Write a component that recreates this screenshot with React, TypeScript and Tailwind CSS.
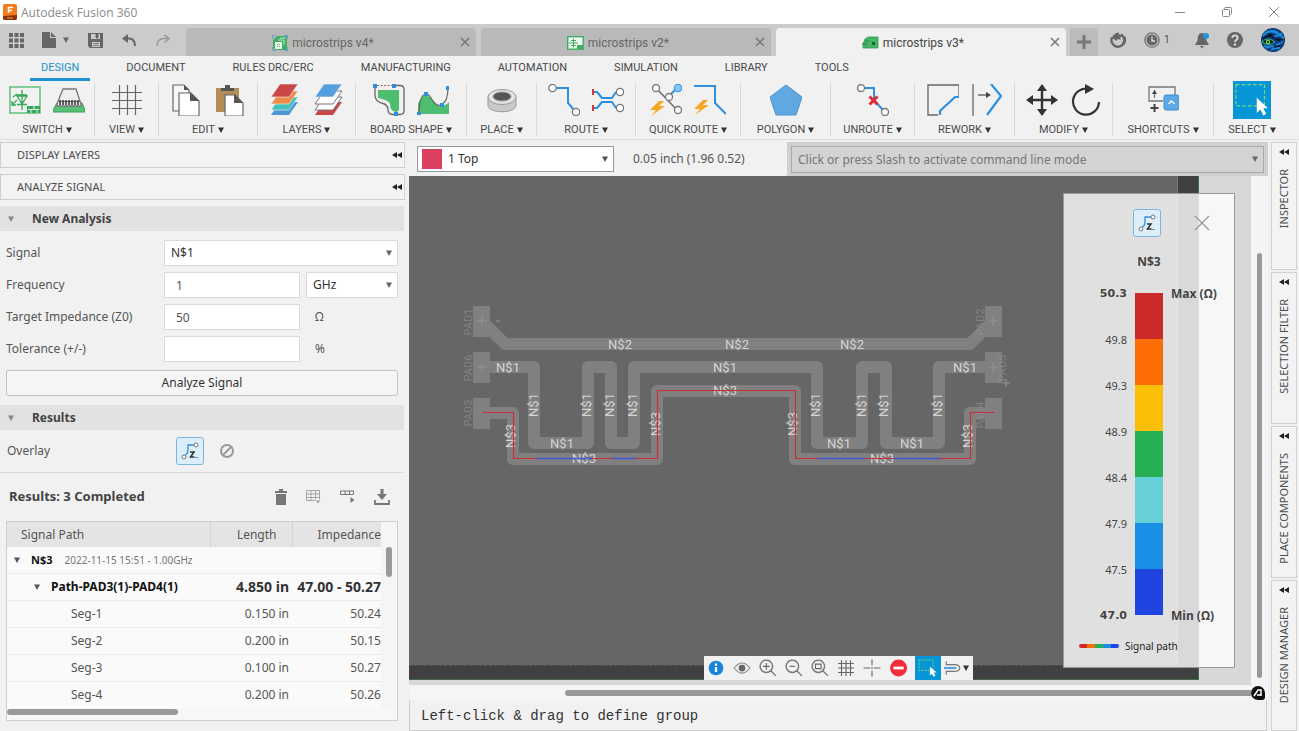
import { useState, type ReactNode } from "react"
import clsx from "clsx"

const ui = "font-['Noto_Sans',sans-serif]"

function Caret({ className = "" }: { className?: string }) {
    return (
        <svg viewBox="0 0 6 6" className={clsx("h-[6px] w-[6px] shrink-0", className)} aria-hidden="true">
            <path d="M0 .5h6L3 6z" fill="currentColor" />
        </svg>
    )
}

function Rewind() {
    return (
        <svg viewBox="0 0 10 6" className="h-[6px] w-[10px] shrink-0 text-[#222]" aria-hidden="true">
            <path d="M5 0v6L0 3zM10 0v6L5 3z" fill="currentColor" />
        </svg>
    )
}

function Icon({ children, className = "h-8 w-8" }: { children: ReactNode; className?: string }) {
    return (
        <svg viewBox="0 0 32 32" fill="none" className={clsx("shrink-0", className)} aria-hidden="true">
            {children}
        </svg>
    )
}

/* ---------- title bar ---------- */

function TitleBar() {
    return (
        <header className="flex h-6 shrink-0 items-center bg-white pl-[3px] font-['Open_Sans',sans-serif]">
            <svg viewBox="0 0 14 16" className="h-4 w-[14px]" aria-hidden="true">
                <rect width="14" height="16" rx="2" fill="#f47a1f" />
                <path d="M0 12l14-1v3a2 2 0 0 1-2 2H2a2 2 0 0 1-2-2z" fill="#8a3208" />
                <path d="M5.5 9V3.5H10M5.5 6.5H9" stroke="#fff" strokeWidth="1.5" fill="none" />
                <path d="M4 14h6" stroke="#e8a070" />
            </svg>
            <h1 className="ml-1 pt-px text-[12px] text-[#8a8a8a]">Autodesk Fusion 360</h1>
            <div className="ml-auto flex items-center gap-[35px] pr-[19px] text-[#888]">
                <button aria-label="Minimize">
                    <svg viewBox="0 0 12 12" className="h-3 w-3"><path d="M1 6.5h10" stroke="currentColor" /></svg>
                </button>
                <button aria-label="Restore">
                    <svg viewBox="0 0 12 12" className="h-3 w-3" fill="none" stroke="currentColor">
                        <rect x="1.5" y="3.5" width="7" height="7" rx="1" />
                        <path d="M3.5 3.5v-1a1 1 0 0 1 1-1h5a1 1 0 0 1 1 1v5a1 1 0 0 1-1 1h-1" />
                    </svg>
                </button>
                <button aria-label="Close">
                    <svg viewBox="0 0 12 12" className="h-3 w-3"><path d="M1 1l10 10M11 1L1 11" stroke="currentColor" /></svg>
                </button>
            </div>
        </header>
    )
}

/* ---------- document tabs ---------- */

const docIcons = {
    board3d: (
        <svg viewBox="0 0 16 16" className="h-4 w-4" aria-hidden="true">
            <path d="M1 5l4-4h10v14H3l-2-2z" fill="#3fae63" />
            <path d="M3 7h7v7H3z" fill="#e9f7ee" />
            <path d="M5 9h1v1H5zM7 9h1v1H7zM5 11h1v1H5zM7 11h1v1H7z" fill="#3fae63" />
            <path d="M6 5h6v5M8 3h6" stroke="#bfe8cc" fill="none" />
            <path d="M0 4V0h4M12 0h4v4M16 12v4h-4M4 16H0v-4" stroke="#3b8de0" fill="none" />
        </svg>
    ),
    schematic: (
        <svg viewBox="0 0 17 14" className="h-[14px] w-[17px]" fill="none" stroke="#3fae63" aria-hidden="true">
            <rect x=".7" y=".7" width="15.5" height="12.5" fill="#eef8f1" strokeWidth="1.4" />
            <path d="M2 7h9M6.5 2.5v9M4 4.5h5M4 9.5h5" />
            <rect x="10.5" y="9.5" width="5" height="3" fill="#3fae63" />
        </svg>
    ),
    board: (
        <svg viewBox="0 0 17 13" className="h-[13px] w-[17px]" aria-hidden="true">
            <path d="M6 1h10v11H1V8l2-5z" fill="#45b368" stroke="#2f9e54" strokeWidth=".8" />
            <path d="M0 8h5M3 5h4" stroke="#2f7e48" fill="none" />
            <rect x="10" y="6" width="3" height="3" fill="#1f5f36" />
        </svg>
    ),
}

const documents = [
    { name: "microstrips v4*", icon: docIcons.board3d },
    { name: "microstrips v2*", icon: docIcons.schematic },
    { name: "microstrips v3*", icon: docIcons.board },
]

function DocumentBar() {
    const [active, setActive] = useState(2)
    return (
        <div className="flex h-8 shrink-0 items-end bg-[#cbcbcb] pr-[14px] font-['Roboto',sans-serif] text-[#666]">
            <div className="flex h-full w-[186px] shrink-0 items-center pl-[9px]">
                <button aria-label="Data panel">
                    <svg viewBox="0 0 15 15" className="h-[15px] w-[15px]" fill="#666">
                        <path d="M0 0h4v4H0zM5.5 0h4v4h-4zM11 0h4v4h-4zM0 5.5h4v4H0zM5.5 5.5h4v4h-4zM11 5.5h4v4h-4zM0 11h4v4H0zM5.5 11h4v4h-4zM11 11h4v4h-4z" />
                    </svg>
                </button>
                <button aria-label="New file" className="ml-[18px] flex items-center gap-[7px]">
                    <svg viewBox="0 0 14 16" className="h-4 w-[14px]" fill="#666">
                        <path d="M0 0h8v6h6v10H0z" /><path d="M9 0l5 5H9z" />
                    </svg>
                    <Caret />
                </button>
                <button aria-label="Save" className="ml-[19px]">
                    <svg viewBox="0 0 15 15" className="h-[15px] w-[15px]">
                        <path d="M0 0h15v15H2l-2-2z" fill="#666" />
                        <path d="M3 1h9v5H3zM4 9h8v5H4z" fill="#cbcbcb" />
                        <path d="M8 1h2v4H8zM5 10.5h6M5 12.5h6" fill="#666" stroke="#666" strokeWidth=".8" />
                    </svg>
                </button>
                <button aria-label="Undo" className="ml-[19px]">
                    <svg viewBox="0 0 14 13" className="h-[13px] w-[14px]" fill="none" stroke="#666">
                        <path d="M3 4.5h4c4 0 6 3 6 7.5" strokeWidth="2" /><path d="M6 0v9L0 4.5z" fill="#666" stroke="none" />
                    </svg>
                </button>
                <button aria-label="Redo" className="ml-[20px]">
                    <svg viewBox="0 0 14 13" className="h-[13px] w-[14px]" fill="none" stroke="#999">
                        <path d="M12 4.5H8c-4.5 0-7 3-7 7.5M8.5.8L13 4.5l-4.5 4" strokeWidth="1.5" />
                    </svg>
                </button>
            </div>
            <div className="flex min-w-0 flex-1 gap-[5px]">
                {documents.map((doc, i) => (
                    <div
                        key={doc.name}
                        className={clsx(
                            "flex h-7 flex-1 items-center rounded-t-[4px] pr-[6px]",
                            i === active ? "bg-[#f1f1f1] text-[#444]" : "bg-[#b9b9b9]",
                        )}
                    >
                        <button onClick={() => setActive(i)} className="flex flex-1 items-center justify-center gap-1 pt-px text-[12px]">
                            {doc.icon}
                            {doc.name}
                        </button>
                        <button aria-label={"Close " + doc.name}>
                            <svg viewBox="0 0 10 10" className="h-[10px] w-[10px]">
                                <path d="M1 1l8 8M9 1L1 9" stroke="#777" strokeWidth="1.5" />
                            </svg>
                        </button>
                    </div>
                ))}
            </div>
            <button aria-label="New tab" className="ml-1 grid h-7 w-7 shrink-0 place-items-center rounded-t-[3px] bg-[#bbb]">
                <svg viewBox="0 0 14 14" className="h-[14px] w-[14px]"><path d="M7 0v14M0 7h14" stroke="#777" strokeWidth="3" /></svg>
            </button>
            <div className="flex h-full shrink-0 items-center pl-3">
                <button aria-label="Extensions">
                    <svg viewBox="0 0 16 16" className="h-4 w-4" fill="none">
                        <path d="M11 2.5A6.5 6.5 0 1 1 2 5.5" stroke="#666" strokeWidth="2.4" />
                        <path d="M14 5A6.5 6.5 0 0 1 13 12" stroke="#666" strokeWidth="3" />
                        <path d="M2 6q1-5 7-5.5v2l4 .5-3 3 1 2-3-1-2 2-2-2z" fill="#666" />
                    </svg>
                </button>
                <button aria-label="Job status" className="ml-[18px] flex items-center gap-1 text-[11px] text-[#555]">
                    <svg viewBox="0 0 16 16" className="h-4 w-4" fill="none">
                        <circle cx="8" cy="8" r="7.2" stroke="#777" strokeWidth="1.3" />
                        <circle cx="8" cy="8" r="5.6" fill="#666" />
                        <path d="M8 4.5V9h3" stroke="#ddd" strokeWidth="1.3" />
                    </svg>
                    1
                </button>
                <button aria-label="Notifications" className="ml-6">
                    <svg viewBox="0 0 16 17" className="h-[17px] w-4">
                        <path d="M8 1c4 0 4 4 4.5 7.5L15 13H1l2.500-4.500C4 5 4 1 8 1zM6 14h4l-2 2.500z" fill="#666" />
                        <circle cx="12" cy="4" r="3" fill="#1b98e0" />
                    </svg>
                </button>
                <button aria-label="Help" className="ml-[17px]">
                    <svg viewBox="0 0 16 16" className="h-4 w-4" fill="none">
                        <circle cx="8" cy="8" r="8" fill="#666" />
                        <path d="M5.3 6c0-3.500 5.400-3.300 5.400 0C10.700 7.800 8 7.800 8 10" stroke="#ddd" strokeWidth="1.8" />
                        <circle cx="8" cy="12.5" r="1.2" fill="#ddd" />
                    </svg>
                </button>
                <button aria-label="Account" className="ml-[18px]">
                    <svg viewBox="0 0 24 24" className="h-6 w-6" fill="none">
                        <circle cx="12" cy="12" r="12" fill="#0c3d78" />
                        <path d="M2 8q5-6 10-4t9 2M4 5q8-4 13 0M13 9q5-4 10 1M15 17q4-1 7-4M5 20q7-4 13 1M10 22q5-3 9-2M17 13l5-2M3 18l4 1" stroke="#1d8ce0" strokeWidth="1.8" />
                        <path d="M2 11q6-5 10-2t8 5M16 11l6 1M7 6l4 1M13 19l6-1" stroke="#0a1526" strokeWidth="1.5" />
                        <path d="M1 14q5-6 13 0-7 5-13 0z" fill="#10231d" stroke="#39b48c" />
                        <circle cx="7" cy="14" r="2.2" fill="#6ee04f" /><circle cx="7" cy="14" r="1" fill="#061018" />
                    </svg>
                </button>
            </div>
        </div>
    )
}

/* ---------- ribbon ---------- */

const menus = ["DESIGN", "DOCUMENT", "RULES DRC/ERC", "MANUFACTURING", "AUTOMATION", "SIMULATION", "LIBRARY", "TOOLS"]

const blue = "#2f8fdf"
const bolt = "M9 0L0 9h6L1 15l14-10H9L14 0z"

const groups = [
    {
        label: "SWITCH",
        width: "w-[95px]",
        icons: [
            <Icon key="a">
                <rect x="1" y="3" width="30" height="26" stroke="#4fb56f" strokeWidth="1.3" />
                <path d="M13 6v20M8 11h10M8 12h10l-5 8zM8 20.5h10M3 21l5-5M3 17v4h4M4 13l4-3" stroke="#35a85a" strokeWidth="1.3" />
                <path d="M18 22h13v7H18z" fill="#35a85a" /><path d="M19 25.5h11M25 22v3M22 26v3M28 26v3" stroke="#d6f2de" />
            </Icon>,
            <Icon key="b">
                <path d="M4 19h25l3 7v2H0v-2z" fill="#57c274" stroke="#3b9c57" />
                <path d="M10 5h13l5 15v2H4v-2z" fill="#eee" stroke="#777" strokeWidth="1.3" />
                <path d="M6 17.5h21" stroke="#777" />
                <path d="M7 16v5M10 16v5M13 16v5M16 16v5M19 16v5M22 16v5M25 16v5" stroke="#333" strokeWidth="1.5" />
            </Icon>,
        ],
    },
    {
        label: "VIEW",
        width: "w-[64px]",
        icons: [<Icon key="a"><path d="M8.5 1v30M16.5 1v30M24.5 1v30M1 8.5h30M1 16.5h30M1 24.5h30" stroke="#666" strokeWidth="1.2" /></Icon>],
    },
    {
        label: "EDIT",
        width: "w-[99px]",
        icons: [
            <Icon key="a">
                <path d="M3 1h11l5 5v21H3z" fill="#f6f6f6" stroke="#666" strokeWidth="1.2" />
                <path d="M9 9h12l8 8v15H9z" fill="#fff" stroke="#666" strokeWidth="1.2" /><path d="M20 8l9 9h-9zM14 1l5 5h-5z" fill="#555" />
            </Icon>,
            <Icon key="b">
                <path d="M2 4h23v24H2z" fill="#b48c58" /><path d="M7 4h13v3H7zM11 1h5v3h-5z" fill="#555" />
                <path d="M11 11h10l8 8v13H11z" fill="#fff" stroke="#666" strokeWidth="1.2" /><path d="M20 10l9 9h-9z" fill="#555" />
            </Icon>,
        ],
    },
    {
        label: "LAYERS",
        width: "w-[98px]",
        icons: [
            <Icon key="a">
                <path d="M11 18h18L20 31H2z" fill="#4c97d8" /><path d="M11 13h18L20 26H2z" fill="#45c0bd" stroke="#f1f1f1" strokeWidth=".6" />
                <path d="M11 7h18L20 20H2z" fill="#f08a48" stroke="#f1f1f1" strokeWidth=".6" /><path d="M11 0h18L20 13H2z" fill="#cb4747" stroke="#f1f1f1" strokeWidth=".6" />
            </Icon>,
            <Icon key="b">
                <path d="M11 18h18L20 31H2z" fill="#cb4747" /><path d="M11 13h18L20 26H2z" fill="#fff" stroke="#777" />
                <path d="M11 7h18L20 20H2z" fill="#fff" stroke="#777" /><path d="M11 0h18L20 13H2z" fill="#559fe0" stroke="#f1f1f1" strokeWidth=".6" />
            </Icon>,
        ],
    },
    {
        label: "BOARD SHAPE",
        width: "w-[111px]",
        icons: [
            <Icon key="a">
                <path d="M5 6h21v20l-2 2q-7 0-7-8-1-4-12-6z" fill="#4fbd70" />
                <path d="M21 1.5h6q4 0 4 4v21q0 4-4 4h-7q-5 0-5-5-.5-5-5-6-8-2-8-8V2" stroke="#666" strokeWidth="1.3" />
                <path d="M4 1.5h16" stroke="#b35a5a" strokeDasharray="2 1.5" />
                <path d="M0 0h4v4H0zM19 0h4v4h-4zM21 28h4v4h-4z" fill={blue} />
            </Icon>,
            <Icon key="b">
                <path d="M1 30V20q5-13 12-7l8 9q7 1 11-4v12z" fill="#4fbd70" />
                <path d="M2 28Q3 10 9 10q3 0 5 4 5 9 10 7 7-3 7-17" stroke="#666" strokeWidth="1.2" />
                <path d="M0 28h4v3H0zM7 8h4v4H7zM23 19h4v4h-4zM29 2h3v4h-3z" fill={blue} />
            </Icon>,
        ],
    },
    {
        label: "PLACE",
        width: "w-[70px]",
        icons: [
            <Icon key="a">
                <path d="M2 13v8c0 9 28 9 28 0v-8z" fill="#c9c9c9" stroke="#999" />
                <ellipse cx="16" cy="13" rx="14" ry="7.5" fill="#e3e3e3" stroke="#999" /><ellipse cx="16" cy="12.5" rx="9" ry="4.5" fill="#555" stroke="#999" />
            </Icon>,
        ],
    },
    {
        label: "ROUTE",
        width: "w-[99px]",
        icons: [
            <Icon key="a">
                <path d="M8 4h12v15l6 7" stroke={blue} strokeWidth="2" />
                <circle cx="4.5" cy="4" r="3.7" fill="#fff" stroke="#777" strokeWidth="1.3" /><circle cx="28" cy="28" r="3.7" fill="#fff" stroke="#777" strokeWidth="1.3" />
            </Icon>,
            <Icon key="b">
                <path d="M1 8h4l5 6h10l4-6M1 24h4l5-6h10l4 6" stroke={blue} strokeWidth="2" strokeLinejoin="round" />
                <path d="M1 5v6M1 21v6" stroke="#d33" strokeWidth="2" />
                <circle cx="28" cy="8" r="3.7" fill="#fff" stroke="#777" strokeWidth="1.3" /><circle cx="28" cy="24" r="3.7" fill="#fff" stroke="#777" strokeWidth="1.3" />
            </Icon>,
        ],
    },
    {
        label: "QUICK ROUTE",
        width: "w-[105px]",
        icons: [
            <Icon key="a">
                <path d="M7 5l20 21" stroke="#666" strokeWidth="1.4" /><path d="M18 13l8-8" stroke={blue} strokeWidth="2" />
                <g fill="#fff" stroke="#777" strokeWidth="1.3"><circle cx="6" cy="4" r="3.5" /><circle cx="19" cy="13" r="3.5" /><circle cx="28" cy="26" r="3.5" /></g>
                <circle cx="28" cy="4" r="3.8" fill="#8cc4f4" stroke={blue} />
                <path d={bolt} fill="#f5a623" transform="translate(0 17)" />
            </Icon>,
            <Icon key="b">
                <path d="M0 2h21v17l11 11" stroke={blue} strokeWidth="2" />
                <path d={bolt} fill="#f5a623" transform="translate(0 16)" />
            </Icon>,
        ],
    },
    {
        label: "POLYGON",
        width: "w-[90px]",
        icons: [<Icon key="a"><path d="M16 1l16 12-6 18H6L0 13z" fill="#5fa8e2" stroke="#4a92cc" /></Icon>],
    },
    {
        label: "UNROUTE",
        width: "w-[84px]",
        icons: [
            <Icon key="a">
                <path d="M7 4h10v12l9 10" stroke={blue} strokeWidth="2" />
                <circle cx="4" cy="4" r="3.5" fill="#fff" stroke="#777" strokeWidth="1.3" /><circle cx="28" cy="28" r="3.5" fill="#fff" stroke="#777" strokeWidth="1.3" />
                <path d="M12.5 12.5l8 8M20.5 12.5l-8 8" stroke="#e12d39" strokeWidth="3" />
            </Icon>,
        ],
    },
    {
        label: "REWORK",
        width: "w-[100px]",
        icons: [
            <Icon key="a">
                <path d="M32 13V1H1v30h10" stroke="#666" strokeWidth="1.3" /><path d="M32 13h-4L13 27v4" stroke={blue} strokeWidth="2.2" />
            </Icon>,
            <Icon key="b">
                <path d="M2 0v32" stroke="#666" strokeWidth="1.3" /><path d="M7 11h9" stroke="#555" strokeWidth="1.3" /><path d="M15 8l5 3-5 3z" fill="#444" />
                <path d="M20 0l10 12-14 19" stroke={blue} strokeWidth="2.2" />
            </Icon>,
        ],
    },
    {
        label: "MODIFY",
        width: "w-[98px]",
        icons: [
            <Icon key="a">
                <path d="M16 4v24M4 16h24" stroke="#333" strokeWidth="2.4" />
                <path d="M16 0l5 7H11zM16 32l5-7H11zM0 16l7-5v10zM32 16l-7-5v10z" fill="#333" />
            </Icon>,
            <Icon key="b"><path d="M19 5A13 13 0 1 0 29 18" stroke="#333" strokeWidth="2.2" /><path d="M15 0l9 5-9 5z" fill="#333" /></Icon>,
        ],
    },
    {
        label: "SHORTCUTS",
        width: "w-[101px]",
        icons: [
            <Icon key="a">
                <path d="M28 11V3H2v14h14M7.5 6v8" stroke="#777" strokeWidth="1.3" /><path d="M7.5 6l2.5 4H5zM6.5 20h2v8h-2zM3.5 23h8v2h-8z" fill="#444" />
                <rect x="17" y="11" width="15" height="15" rx="2" fill="#5da9e6" stroke="#3f8ccb" /><path d="M21.5 20l3-3 3 3" stroke="#fff" strokeWidth="1.3" />
            </Icon>,
        ],
    },
    {
        label: "SELECT",
        width: "w-[76px]",
        icons: [
            <Icon key="a" className="-my-[3px] h-[38px] w-[38px]">
                <path d="M0 0h32v32H0z" fill="#0696d7" />
                <path d="M2.5 3h24v18h-24z" stroke="#7fd672" strokeDasharray="3 1.8" />
                <path d="M20 14v13l3-3 2.5 5 2.5-1.5-2.5-4.5h4z" fill="#fff" />
            </Icon>,
        ],
    },
]

function Ribbon() {
    const [active, setActive] = useState("DESIGN")
    return (
        <div className="shrink-0 border-b border-[#dcdcdc] bg-[#f1f1f1] font-['Roboto',sans-serif] text-[#4a4a4a]">
            <nav className="flex h-[25px] gap-[25px] pl-[30px] text-[11px]">
                {menus.map((m) => (
                    <button
                        key={m}
                        onClick={() => setActive(m)}
                        className={clsx("border-b-[3px] px-[11px] pt-[2px]", m === active ? "border-[#1e90d0] text-[#1e90d0]" : "border-transparent")}
                    >
                        {m}
                    </button>
                ))}
            </nav>
            <div className="flex h-[58px] items-stretch pt-[2px] pb-[3px]">
                {groups.map((g) => (
                    <div key={g.label} className={clsx("flex shrink-0 flex-col items-center justify-between border-r border-[#d9d9d9] last:border-0", g.width)}>
                        <div className="flex gap-3 pt-px">{g.icons}</div>
                        <button className="flex items-center gap-[3px] text-[11px] leading-[12px] whitespace-nowrap">
                            {g.label}
                            <Caret className="text-[#333]" />
                        </button>
                    </div>
                ))}
            </div>
        </div>
    )
}

/* ---------- analysis panel ---------- */

function PanelTitle({ children }: { children: ReactNode }) {
    return (
        <div className="flex h-[26px] items-center justify-between border border-[#cfcfcf] bg-[#f3f3f3] pr-[2px] pl-4 text-[11px] text-[#4d4d4d]">
            <h2>{children}</h2>
            <button aria-label="Collapse"><Rewind /></button>
        </div>
    )
}

function SectionTitle({ children }: { children: ReactNode }) {
    return (
        <h3 className="flex h-[25px] items-center bg-[#e1e1e1] pl-2 text-[12px] font-bold text-[#444]">
            <Caret className="mr-[18px] text-[#888]" />
            {children}
        </h3>
    )
}

function Select({ id, options, className = "", label }: { id: string; options: string[]; className?: string; label?: string }) {
    return (
        <div className={clsx("relative", className)}>
            <select id={id} aria-label={label} className="h-[26px] w-full appearance-none border border-[#dadada] bg-white pl-[6px] text-[12px] text-[#333]">
                {options.map((o) => <option key={o}>{o}</option>)}
            </select>
            <Caret className="pointer-events-none absolute top-[10px] right-[6px] text-[#666]" />
        </div>
    )
}

function OverlayIcon() {
    return (
        <span className="grid h-7 w-7 place-items-center rounded-[3px] border border-[#7db4dc] bg-[#dceefa]">
            <svg viewBox="0 0 20 20" className="h-5 w-5" fill="none" aria-hidden="true">
                <path d="M5 14q3-1 3-5V4h6" stroke={blue} strokeWidth="1.3" />
                <circle cx="4" cy="16" r="2" fill="#fff" stroke="#777" /><circle cx="16" cy="4" r="2" fill="#fff" stroke="#777" />
                <path d="M10 11h4l-3.5 5h4" stroke="#333" strokeWidth="1.5" /><path d="M15 16.5h3" stroke="#888" />
            </svg>
        </span>
    )
}

const segments = [
    ["Seg-1", "0.150 in", "50.24"],
    ["Seg-2", "0.200 in", "50.15"],
    ["Seg-3", "0.100 in", "50.27"],
    ["Seg-4", "0.200 in", "50.26"],
]

function ResultsTable() {
    return (
        <div className="mx-[6px] flex flex-col border border-[#cfcfcf] bg-[#fafafa]">
            <div className="flex h-[186px]">
                <div className="min-w-0 flex-1 overflow-hidden">
                    <table className="w-full table-fixed border-collapse text-[12px] text-[#555]">
                        <colgroup>
                            <col className="w-[203px]" />
                            <col className="w-[82px]" />
                            <col />
                        </colgroup>
                        <thead>
                            <tr className="h-[25px] bg-[#e4e4e4]">
                                <th className="border-r border-[#d3d3d3] pl-[14px] text-left font-normal">Signal Path</th>
                                <th className="border-r border-[#d3d3d3] pr-[15px] text-right font-normal">Length</th>
                                <th className="text-right font-normal">Impedance</th>
                            </tr>
                        </thead>
                        <tbody>
                            <tr className="h-[26px] border-b border-[#ebebeb]">
                                <td colSpan={3}>
                                    <div className="flex items-center pl-[7px] text-[10px] leading-[16px] text-[#777]">
                                        <Caret className="text-[#555]" />
                                        <b className="mr-3 ml-[11px] text-[11px] text-[#111]">N$3</b>
                                        2022-11-15 15:51 - 1.00GHz
                                    </div>
                                </td>
                            </tr>
                            <tr className="h-[27px] border-b border-[#ebebeb] font-bold whitespace-nowrap">
                                <td>
                                    <div className="flex items-center pl-[27px] text-[12px] text-[#111]">
                                        <Caret className="mr-[11px] text-[#555]" />
                                        Path-PAD3(1)-PAD4(1)
                                    </div>
                                </td>
                                <td className="pr-[3px] text-right text-[14px] text-[#333]">4.850 in</td>
                                <td className="text-right text-[14px] text-[#333]">47.00 - 50.27</td>
                            </tr>
                            {segments.map(([name, length, impedance]) => (
                                <tr key={name} className="h-[27px] border-b border-[#ebebeb] last:border-0">
                                    <td className="pl-[64px]">{name}</td>
                                    <td className="pr-[3px] text-right">{length}</td>
                                    <td className="text-right">{impedance}</td>
                                </tr>
                            ))}
                        </tbody>
                    </table>
                </div>
                <div className="w-4 shrink-0 bg-[#f5f5f5] pt-[25px] pl-[5px]">
                    <div className="h-[30px] w-[6px] rounded-full bg-[#999]" />
                </div>
            </div>
            <div className="h-3 bg-[#f7f7f7] pt-px">
                <div className="h-[6px] w-[171px] rounded-full bg-[#999]" />
            </div>
        </div>
    )
}

const field = "h-[26px] w-[136px] border border-[#dadada] bg-white px-[11px] text-[12px] text-[#555]"
const row = "flex items-center"
const rowLabel = "w-[158px] shrink-0"

function AnalyzePanel() {
    return (
        <aside className={clsx("w-[405px] shrink-0 bg-[#f1f1f1] pt-[2px] text-[12px] text-[#555]", ui)}>
            <PanelTitle>DISPLAY LAYERS</PanelTitle>
            <div className="h-[6px]" />
            <PanelTitle>ANALYZE SIGNAL</PanelTitle>
            <div className="flex flex-col pt-[6px] pr-px">
                <SectionTitle>New Analysis</SectionTitle>
                <form className="flex flex-col gap-[6px] px-[6px] pt-[9px] pb-[9px]" onSubmit={(e) => e.preventDefault()}>
                    <div className={row}>
                        <label htmlFor="signal" className={rowLabel}>Signal</label>
                        <Select id="signal" options={["N$1", "N$2", "N$3"]} className="flex-1" />
                    </div>
                    <div className={row}>
                        <label htmlFor="freq" className={rowLabel}>Frequency</label>
                        <input id="freq" defaultValue="1" className={field} />
                        <Select id="unit" label="Frequency unit" options={["GHz", "MHz"]} className="ml-[6px] flex-1" />
                    </div>
                    <div className={row}>
                        <label htmlFor="z0" className={rowLabel}>Target Impedance (Z0)</label>
                        <input id="z0" defaultValue="50" className={field} />
                        <span className="ml-[15px]">Ω</span>
                    </div>
                    <div className={row}>
                        <label htmlFor="tol" className={rowLabel}>Tolerance (+/-)</label>
                        <input id="tol" className={field} />
                        <span className="ml-[15px]">%</span>
                    </div>
                    <button className="mt-[2px] h-[26px] rounded-[2px] border border-[#c4c4c4] bg-[#f5f5f5] text-[#333]">Analyze Signal</button>
                </form>
                <SectionTitle>Results</SectionTitle>
                <div className="flex h-[43px] items-center border-b border-[#d9d9d9] pl-[7px]">
                    <span className="w-[169px]">Overlay</span>
                    <button aria-label="Show impedance overlay"><OverlayIcon /></button>
                    <button aria-label="Hide overlay" className="ml-4">
                        <svg viewBox="0 0 14 14" className="h-[14px] w-[14px]" fill="none" stroke="#999" strokeWidth="2">
                            <circle cx="7" cy="7" r="6" /><path d="M3 11l8-8" />
                        </svg>
                    </button>
                </div>
                <div className="flex h-12 items-center pr-[14px] pl-[9px]">
                    <h4 className="flex-1 text-[13px] font-bold text-[#444]">Results: 3 Completed</h4>
                    <div className="flex items-center gap-[19px]">
                        <button aria-label="Delete">
                            <svg viewBox="0 0 12 16" className="h-4 w-3" fill="#777"><path d="M1 5h10v11H1zM0 2h12v2H0zM4 0h4v2H4z" /></svg>
                        </button>
                        <button aria-label="Table options">
                            <svg viewBox="0 0 15 14" className="h-[14px] w-[15px]" fill="none" stroke="#a5a5a5">
                                <path d="M.5.5h13v10H.5zM.5 4h13M.5 7.5h13M5 0v10M9.5 0v10" /><path d="M9 10h6l-3 4z" fill="#999" stroke="#f1f1f1" />
                            </svg>
                        </button>
                        <button aria-label="Show columns">
                            <svg viewBox="0 0 15 14" className="h-[14px] w-[15px]" fill="none" stroke="#777">
                                <path d="M.5 1h13v3.5H.5zM5 1v3M9.5 1v3" /><path d="M10.5 7v6l4-3z" fill="#777" stroke="none" />
                            </svg>
                        </button>
                        <button aria-label="Download">
                            <svg viewBox="0 0 16 16" className="h-4 w-4" fill="#777">
                                <path d="M6.5 0h3v5H13l-5 6-5-6h3.5z" /><path d="M1 11v4h14v-4" fill="none" stroke="#777" strokeWidth="1.8" />
                            </svg>
                        </button>
                    </div>
                </div>
                <ResultsTable />
            </div>
        </aside>
    )
}

/* ---------- board ---------- */

const n1 = "M482 367H534V443H588V367H611V443H634V367H817V443H862V367H886V443H939V367H992"
const n2 = "M482 321L505 344H970L993 321"
const n3 = "M482 413H513V459H657V391H795V459H970V413H994"

type NetLabel = [string, number, number, boolean?]

const netLabels: NetLabel[] = [
    ["N$2", 620, 344], ["N$2", 737, 344], ["N$2", 852, 344],
    ["N$1", 508, 367], ["N$1", 725, 367], ["N$1", 965, 367],
    ["N$1", 562, 443], ["N$1", 839, 443], ["N$1", 912, 443],
    ["N$1", 533, 405, true], ["N$1", 586, 405, true], ["N$1", 609, 405, true], ["N$1", 632, 405, true],
    ["N$1", 815, 405, true], ["N$1", 861, 405, true], ["N$1", 883, 405, true], ["N$1", 937, 405, true],
    ["N$3", 725, 390], ["N$3", 584, 458], ["N$3", 882, 458],
    ["N$3", 510, 436, true], ["N$3", 655, 424, true], ["N$3", 792, 424, true], ["N$3", 967, 436, true],
]

const padLabels: [string, number, number][] = [
    ["PAD1", 468, 322], ["PAD6", 468, 368], ["PAD3", 468, 413],
    ["PAD2", 980, 322], ["PAD5", 1002, 368], ["PAD4", 980, 415],
]

function Traces() {
    return (
        <svg viewBox="409 176 768 489" preserveAspectRatio="xMinYMin meet" className="h-full w-full font-['Roboto',sans-serif]" role="img" aria-label="Board traces">
            <g fill="#808080">
                {[306, 352, 398].map((y) => (
                    <g key={y}>
                        <rect x="473" y={y} width="17" height="31" />
                        <rect x="985" y={y} width="17" height="31" />
                    </g>
                ))}
            </g>
            <g fill="none" stroke="#808080" strokeWidth="12" strokeLinejoin="round">
                <path d={n1} />
                <path d={n2} />
                <path d={n3} />
            </g>
            <path d="M477 321h10M482 316v10M988 321h10M993 316v10M478 367h8M482 363v8M988 367h10M993 362v10M1002 383h8M1006 379v8M496 321h4" stroke="#949494" />
            {padLabels.map(([text, x, y]) => (
                <text key={text} transform={`translate(${x} ${y}) rotate(-90)`} textAnchor="middle" dy="4" fontSize="11" fill="#909090" opacity=".7">{text}</text>
            ))}
            {netLabels.map(([text, x, y, vertical], i) => (
                <text key={i} transform={`translate(${x} ${y})${vertical ? " rotate(-90)" : ""}`} textAnchor="middle" dy="5" fontSize="13" fill="#d4d4d4">{text}</text>
            ))}
            <g fill="none" strokeWidth="1.2" transform="translate(.5 -.5)">
                <path d={n3} stroke="#d02c34" />
                <path d="M536 459h55M612 459h23M817 459h48M893 459h47" stroke="#4358d8" strokeWidth="1.6" />
            </g>
        </svg>
    )
}

const scale = [
    { value: "50.3", color: "bg-[#cb2a2a]" },
    { value: "49.8", color: "bg-[#fc6d03]" },
    { value: "49.3", color: "bg-[#fbbf08]" },
    { value: "48.9", color: "bg-[#27b053]" },
    { value: "48.4", color: "bg-[#66d0d8]" },
    { value: "47.9", color: "bg-[#1a8fe6]" },
    { value: "47.5", color: "bg-[#2044e0]" },
]

const extreme = "font-['DejaVu_Sans',sans-serif] font-bold"

function Legend() {
    return (
        <section className="absolute top-[17px] right-4 w-[172px] border border-[#999] bg-white/80 pt-[15px] pb-[14px] text-[11px] leading-[14px] text-[#444]">
            <div className="flex items-center pl-[69px]">
                <OverlayIcon />
                <button aria-label="Close legend" className="ml-[33px]">
                    <svg viewBox="0 0 16 16" className="h-4 w-4"><path d="M1 1l14 14M15 1L1 15" stroke="#999" strokeWidth="1.3" /></svg>
                </button>
            </div>
            <h3 className="mt-[18px] text-center text-[12px] font-bold">N$3</h3>
            <div className="mt-[24px] flex">
                <ul className="-mt-[6px] w-[63px] text-right">
                    {scale.map((s, i) => (
                        <li key={s.value} className={clsx("h-[46px]", i === 0 && extreme)}>{s.value}</li>
                    ))}
                    <li className={clsx("h-[14px]", extreme)}>47.0</li>
                </ul>
                <div className="ml-2 w-[28px]">
                    {scale.map((s) => <div key={s.value} className={clsx("h-[46px]", s.color)} />)}
                </div>
                <div className="-mt-[6px] ml-2 flex h-[336px] flex-col justify-between text-[12px] font-bold">
                    <span>Max (Ω)</span>
                    <span>Min (Ω)</span>
                </div>
            </div>
            <div className="mt-4 flex items-center gap-[6px] pl-[15px] text-[10px] text-[#222]">
                <span className="flex h-1 w-10 overflow-hidden rounded-full">
                    <span className="flex-1 bg-[#cb2a2a]" />
                    <span className="flex-1 bg-[#fc6d03]" />
                    <span className="flex-1 bg-[#27b053]" />
                    <span className="flex-1 bg-[#1a8fe6]" />
                    <span className="flex-1 bg-[#2044e0]" />
                </span>
                Signal path
            </div>
        </section>
    )
}

const lens = <path d="M13 2a11 11 0 1 0 .1 0zM21 21l9 9" stroke="#777" strokeWidth="2.5" />

const viewTools = [
    { name: "Info", icon: <><circle cx="16" cy="16" r="13" fill="#1a83dc" /><path d="M16 14v9M16 8v4" stroke="#fff" strokeWidth="4" /></> },
    { name: "Show", icon: <><path d="M2 16q14-18 28 0-14 18-28 0z" stroke="#888" strokeWidth="2" /><circle cx="16" cy="16" r="6" fill="#666" /></> },
    { name: "Zoom in", icon: <>{lens}<path d="M13 7v12M7 13h12" stroke="#666" strokeWidth="2" /></> },
    { name: "Zoom out", icon: <>{lens}<path d="M8 13h10" stroke="#666" strokeWidth="2" /></> },
    { name: "Zoom to fit", icon: <>{lens}<path d="M8 9h10v8H8z" stroke="#666" strokeWidth="2" /></> },
    { name: "Grid", icon: <path d="M8 2v28M16 2v28M24 2v28M2 8h28M2 16h28M2 24h28" stroke="#666" strokeWidth="2" /> },
    { name: "Cursor", icon: <path d="M16 1v10M16 21v10M1 16h12M19 16h12M16 14v4" stroke="#666" strokeWidth="2" /> },
    { name: "Stop", icon: <><circle cx="17" cy="16" r="15" fill="#f02d38" /><path d="M8 16h18" stroke="#fff" strokeWidth="5" /></> },
]

function ViewToolbar() {
    return (
        <div className="absolute bottom-[5px] left-[295px] flex h-6 items-center bg-[#f1f1f1]">
            {viewTools.map((t) => (
                <button key={t.name} aria-label={t.name} className="grid h-6 w-[26px] place-items-center">
                    <Icon className="-ml-[3px] h-[18px] w-[18px]">{t.icon}</Icon>
                </button>
            ))}
            <button aria-label="Select" className="ml-[3px] grid h-6 w-[26px] place-items-center bg-[#0696d7]">
                <Icon className="h-5 w-5">
                    <path d="M2 3h22v17H2z" stroke="#7fd672" strokeWidth="1.5" strokeDasharray="3 2" />
                    <path d="M19 14v14l3-3 3 5 3-2-3-5h5z" fill="#fff" />
                </Icon>
            </button>
            <button aria-label="Selection mode" className="flex h-6 w-[32px] items-center gap-px pl-[3px]">
                <Icon className="h-[18px] w-[18px]">
                    <path d="M4 4v6h14q10 0 10 6t-10 6H4v6" stroke="#777" strokeWidth="2" /><path d="M0 16h22" stroke="#5aa3e0" strokeWidth="4" />
                </Icon>
                <Caret className="text-[#333]" />
            </button>
        </div>
    )
}

function Workspace() {
    return (
        <main className={clsx("ml-1 flex min-w-0 flex-1 flex-col", ui)}>
            <div className="flex h-9 shrink-0 items-stretch bg-[#f1f1f1] pt-[2px] text-[12px] text-[#555]">
                <div className="relative my-1 ml-2 flex w-[197px] items-center border border-[#999] bg-white pl-1">
                    <span className="h-5 w-5 bg-[#dc4060]" />
                    <select aria-label="Layer" className="h-full min-w-0 flex-1 appearance-none pl-[6px] text-[#333]">
                        <option>1 Top</option>
                        <option>16 Bottom</option>
                    </select>
                    <Caret className="pointer-events-none absolute right-[5px] text-[#555]" />
                </div>
                <output className="ml-[19px] w-[154px] self-center">0.05 inch (1.96 0.52)</output>
                <div className="relative flex flex-1 items-center bg-[#d0d0d0] px-1">
                    <input
                        aria-label="Command line"
                        placeholder="Click or press Slash to activate command line mode"
                        className="h-[27px] w-full border border-[#aaa] bg-[#d3d3d3] px-[6px] placeholder:text-[#777]"
                    />
                    <Caret className="pointer-events-none absolute right-[10px] text-[#666]" />
                </div>
            </div>
            <div className="flex min-h-0 flex-1">
                <div className="relative min-w-0 flex-1 bg-[#d7d9d7] pr-[52px] pb-[5px]">
                    <div className="flex h-full flex-col border-r border-b border-[#3f6b4c] bg-[#666]">
                        <div className="flex min-h-0 flex-1">
                            <div className="min-w-0 flex-1"><Traces /></div>
                            <div className="w-[21px] shrink-0 border-l border-[#777] bg-[#404040]" />
                        </div>
                        <div className="h-[14px] shrink-0 border-t border-dashed border-[#555] bg-[#404040]" />
                    </div>
                    <Legend />
                    <ViewToolbar />
                </div>
                <div className="w-[17px] shrink-0 bg-[#f4f4f4] pt-[77px] pb-[7px] pl-[6px]">
                    <div className="h-full w-[5px] rounded-full bg-[#999]" />
                </div>
            </div>
            <div className="flex h-[15px] shrink-0 items-center bg-[#f5f5f5] pl-[156px]">
                <div className="h-[6px] flex-1 rounded-l-full bg-[#999]" />
                <svg viewBox="0 0 14 14" className="mr-[3px] h-[14px] w-[14px]" aria-hidden="true">
                    <path d="M7 0a7 7 0 0 1 7 7v4q0 3-3 3H7A7 7 0 0 1 7 0z" fill="#111" />
                    <path d="M3 10l4-6h3v6M6 9h4" stroke="#fff" strokeWidth="1.5" fill="none" />
                </svg>
            </div>
            <div className="mr-px flex h-[31px] shrink-0 items-center border border-t-0 border-[#ccc] bg-[#f1f1f1] pt-[2px] pl-[11px] font-['Liberation_Mono',monospace] text-[14px] text-[#333]">
                Left-click &amp; drag to define group
            </div>
        </main>
    )
}

/* ---------- docked panels ---------- */

const docks = [
    { name: "INSPECTOR", size: "h-[128px]" },
    { name: "SELECTION FILTER", size: "h-[152px]" },
    { name: "PLACE COMPONENTS", size: "h-[152px]" },
    { name: "DESIGN MANAGER", size: "flex-1" },
]

function Dock() {
    return (
        <aside className={clsx("mr-[2px] flex w-[29px] shrink-0 flex-col gap-[2px] bg-[#f1f1f1] pt-[2px] pl-[3px] text-[11px] text-[#4d4d4d]", ui)}>
            {docks.map((d) => (
                <button key={d.name} className={clsx("flex flex-col items-center gap-[14px] border border-[#d2d2d2] bg-[#f3f3f3] pt-[6px]", d.size)}>
                    <Rewind />
                    <span className="rotate-180 [writing-mode:vertical-rl]">{d.name}</span>
                </button>
            ))}
        </aside>
    )
}

export default function App() {
    return (
        <div className="flex h-screen flex-col overflow-hidden bg-[#f1f1f1]">
            <TitleBar />
            <DocumentBar />
            <Ribbon />
            <div className="flex min-h-0 flex-1">
                <AnalyzePanel />
                <Workspace />
                <Dock />
            </div>
        </div>
    )
}
